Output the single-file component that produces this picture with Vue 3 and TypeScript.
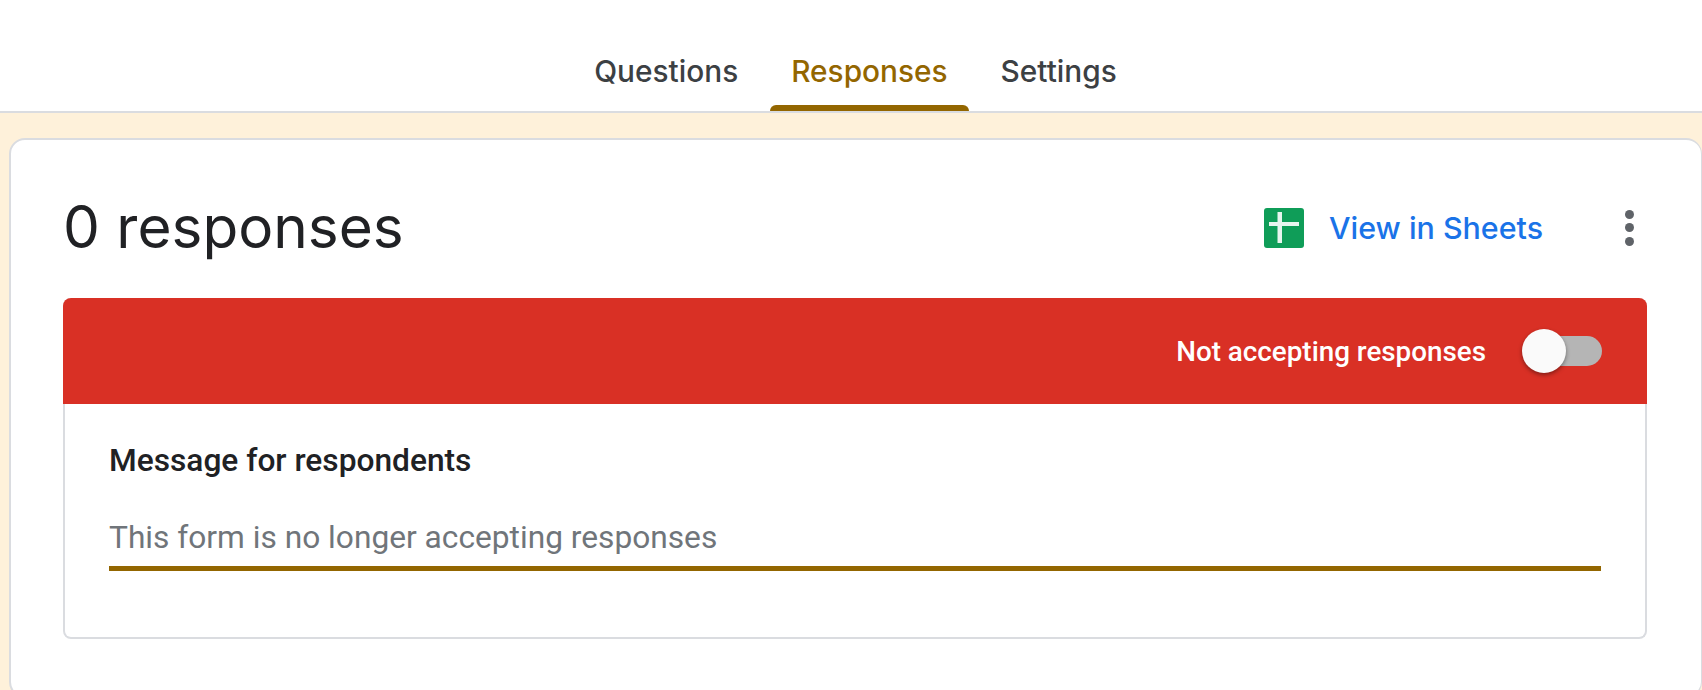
<script setup lang="ts">
const tabs: { label: string; active?: boolean }[] = [
  { label: 'Questions' },
  { label: 'Responses', active: true },
  { label: 'Settings' },
]
</script>

<template>
  <div class="page">
    <header class="tabs">
      <div v-for="t in tabs" :key="t.label" class="tab" :class="{ active: t.active }">{{ t.label }}</div>
    </header>
    <main class="band">
      <section class="card">
        <div class="head">
          <h1 class="title">0 responses</h1>
          <div class="sheets">
            <svg class="sheet-icon" width="40" height="40" viewBox="0 0 40 40">
              <rect width="40" height="40" rx="3" fill="#0f9d58" />
              <rect x="5" y="14" width="30" height="4" fill="#e8f5ee" />
              <rect x="13.5" y="4" width="4.5" height="31" fill="#e8f5ee" />
            </svg>
            <span class="sheets-label">View in Sheets</span>
          </div>
          <div class="more"><i></i><i></i><i></i></div>
        </div>
        <div class="box">
          <div class="banner">
            <span class="banner-label">Not accepting responses</span>
            <span class="switch"><span class="knob"></span></span>
          </div>
          <div class="body">
            <div class="msg-label">Message for respondents</div>
            <div class="field">This form is no longer accepting responses</div>
          </div>
        </div>
      </section>
    </main>
  </div>
</template>

<style>
html, body { margin: 0; background: #fff; }
</style>

<style scoped>
.page {
  width: 1702px;
  height: 690px;
  overflow: hidden;
  display: flex;
  flex-direction: column;
  background: #fef1da;
}
.tabs {
  height: 111px;
  flex: none;
  background: #fff;
  border-bottom: 2px solid #dadce0;
  display: flex;
  justify-content: center;
  gap: 11px;
  padding-left: 9px;
}
.tab {
  position: relative;
  padding: 0 21px;
  font: 500 29.8px/142px Inter, sans-serif;
  color: #3c4043;
  height: 111px;
  overflow: hidden;
  white-space: nowrap;
}
.tab.active { color: #936600; }
.tab.active::after {
  content: "";
  position: absolute;
  left: 0;
  right: 0;
  bottom: 0;
  height: 6px;
  background: #936600;
  border-radius: 6px 6px 0 0;
}
.band {
  flex: 1;
  padding: 25px 0 0 9px;
}
.card {
  box-sizing: border-box;
  height: 560px;
  background: #fff;
  border: 2px solid #dadce0;
  border-right-width: 1px;
  border-radius: 16px;
  padding: 0 54px 0 52px;
}
.head {
  height: 158px;
  display: flex;
  align-items: center;
  padding-top: 17px;
  box-sizing: border-box;
}
.title {
  margin: 0;
  flex: 1;
  font: 400 58.5px/1 Inter, sans-serif;
  color: #202124;
}
.sheets { display: flex; align-items: center; gap: 25px; }
.sheet-icon { display: block; }
.sheets-label {
  font: 500 30.4px/40px Inter, sans-serif;
  color: #1a73e8;
}
.more {
  display: flex;
  flex-direction: column;
  gap: 4.5px;
  margin-left: 82px;
  margin-right: 13px;
}
.more i {
  display: block;
  width: 9px;
  height: 9px;
  border-radius: 50%;
  background: #5f6368;
}
.box {
  border: 2px solid #dadce0;
  border-top: 0;
  border-radius: 8px;
  height: 341px;
  box-sizing: border-box;
}
.banner {
  height: 106px;
  margin: 0 -2px;
  background: #d93025;
  border-radius: 8px 8px 0 0;
  display: flex;
  align-items: center;
  justify-content: flex-end;
  padding-right: 45px;
}
.banner-label {
  font: 500 27.8px/1 Roboto, sans-serif;
  color: #fff;
  margin-right: 50px;
  position: relative;
  top: 1px;
}
.switch {
  position: relative;
  display: block;
  width: 66px;
  height: 30px;
  border-radius: 15px;
  background: #b5b5b5;
}
.knob {
  position: absolute;
  left: -14px;
  top: -7px;
  width: 44px;
  height: 44px;
  border-radius: 50%;
  background: #fafafa;
  box-shadow: 0 2px 4px rgba(0, 0, 0, 0.4);
}
.body { padding: 36px 44px 0 44px; }
.msg-label {
  font: 500 31.7px/42px Roboto, sans-serif;
  color: #202124;
}
.field {
  margin-top: 33px;
  height: 51px;
  border-bottom: 5px solid #936600;
  font: 400 31.7px/46px Roboto, sans-serif;
  color: #70757a;
}
</style>
